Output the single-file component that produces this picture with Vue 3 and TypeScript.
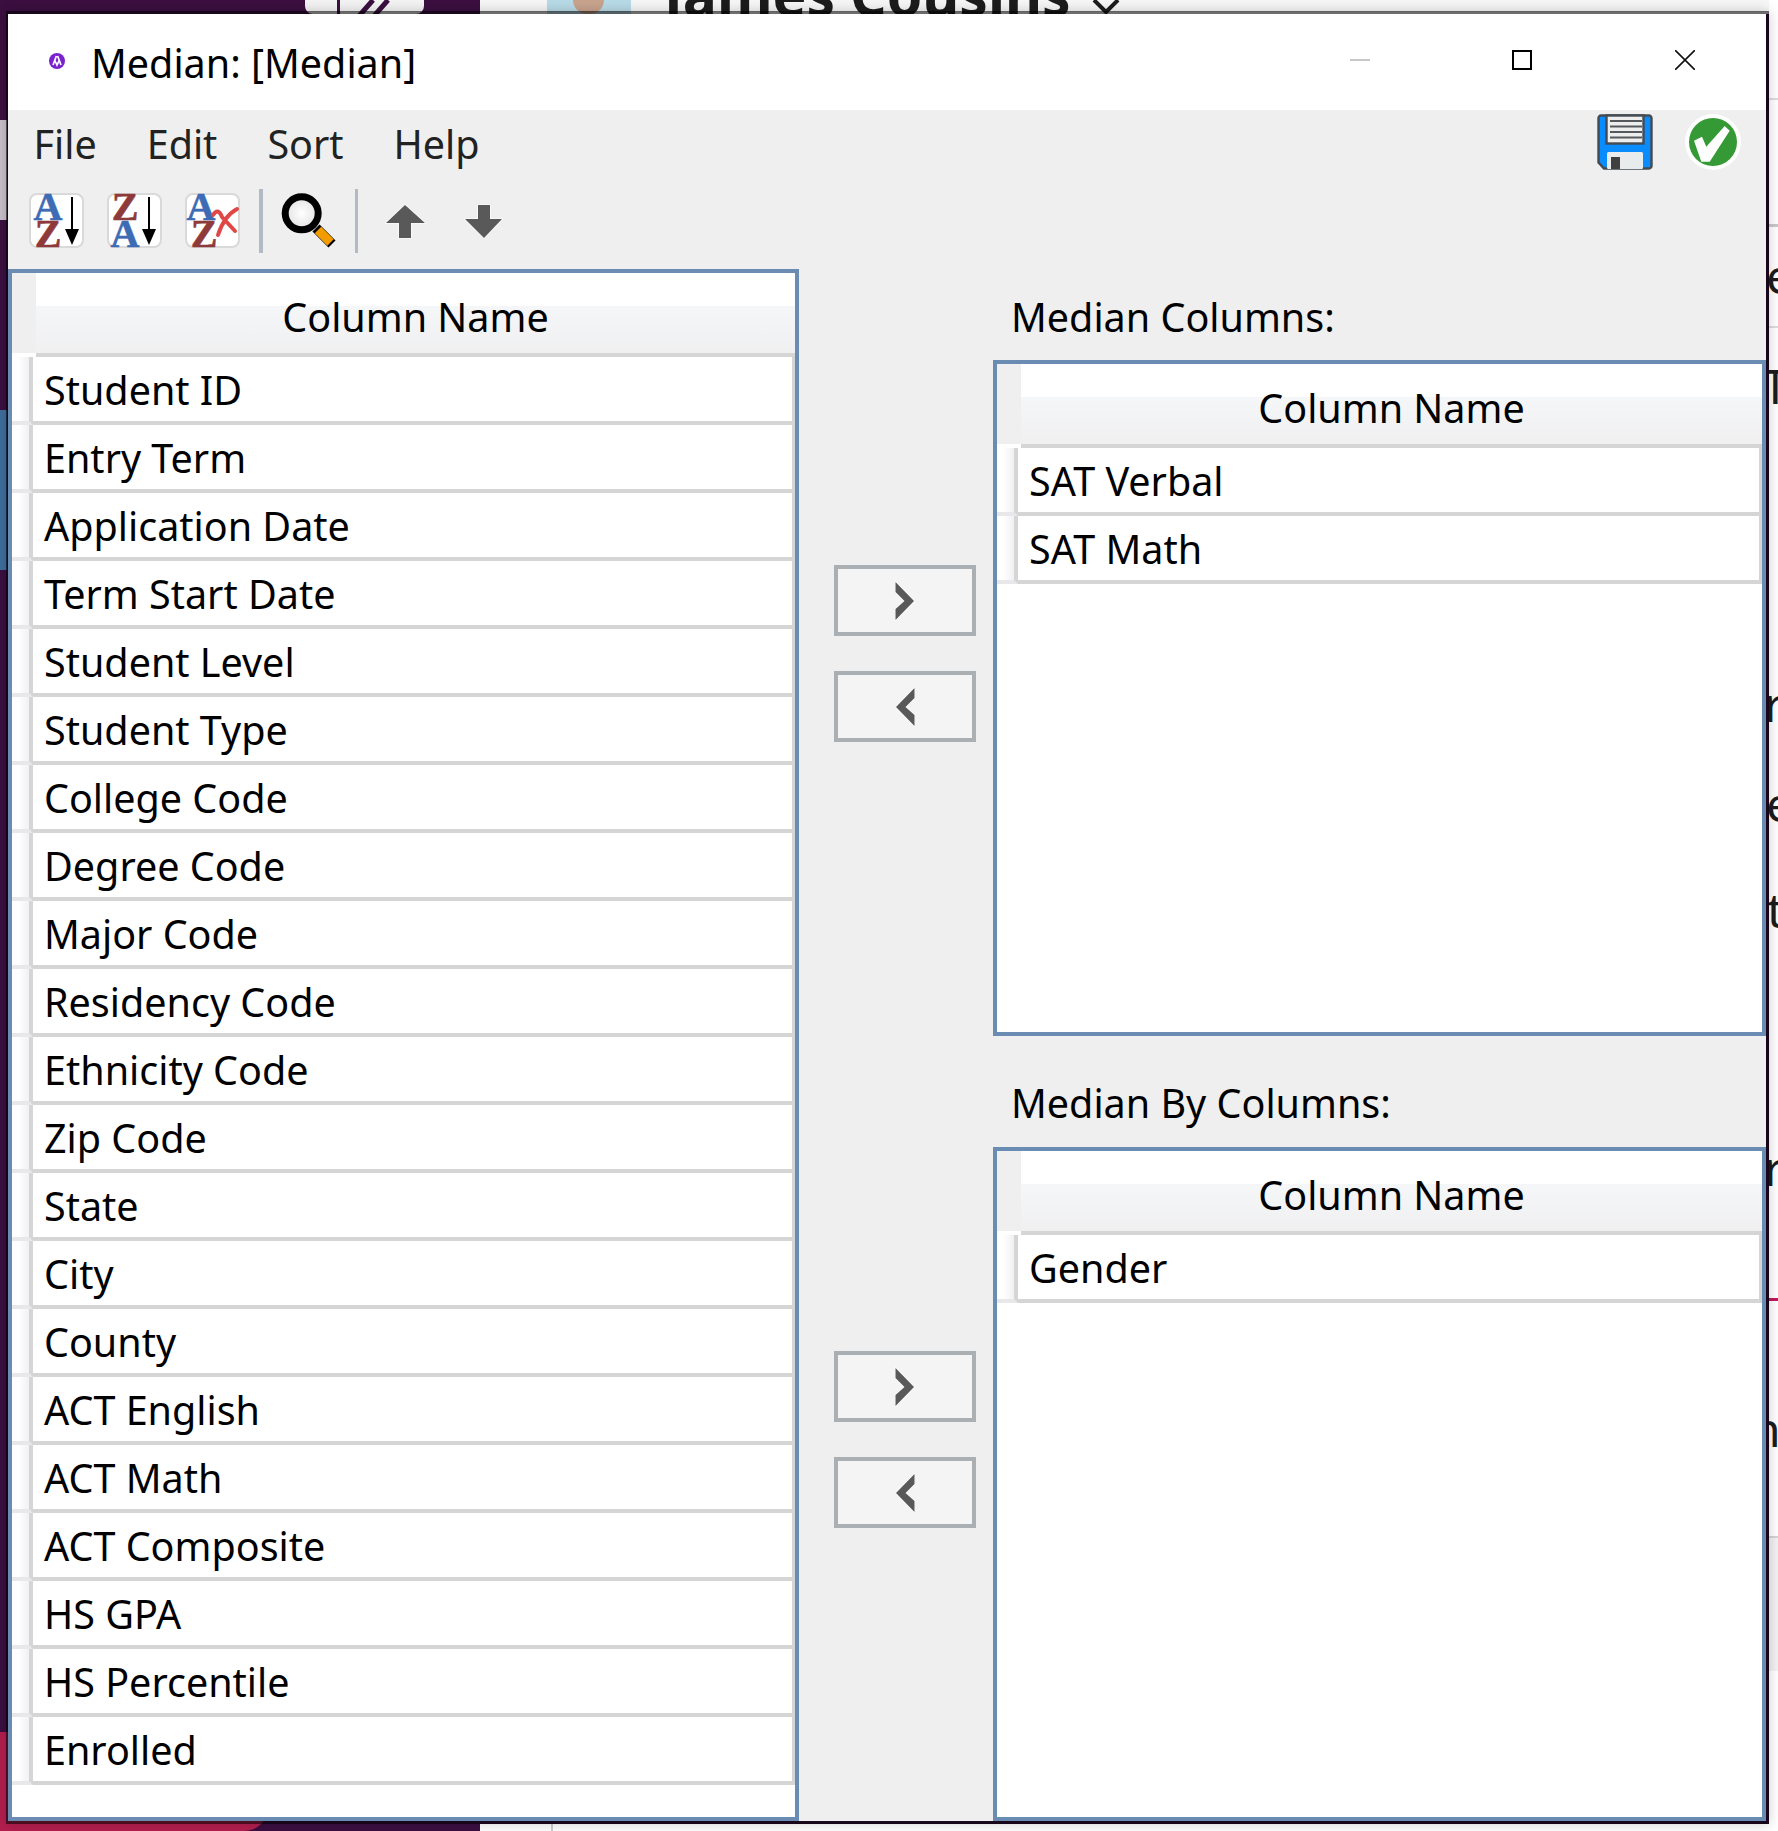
<script setup lang="ts">
const fields: string[] = [
  'Student ID', 'Entry Term', 'Application Date', 'Term Start Date', 'Student Level', 'Student Type',
  'College Code', 'Degree Code', 'Major Code', 'Residency Code', 'Ethnicity Code', 'Zip Code', 'State',
  'City', 'County', 'ACT English', 'ACT Math', 'ACT Composite', 'HS GPA', 'HS Percentile', 'Enrolled'
]
const medianCols: string[] = ['SAT Verbal', 'SAT Math']
const byCols: string[] = ['Gender']
const menus: string[] = ['File', 'Edit', 'Sort', 'Help']
</script>

<template>
  <div class="desk">
    <div class="backdrop">
      <div class="top-white"></div>
      <div class="logo-disc">
        <i></i>
        <svg class="slashes" width="34" height="14" viewBox="0 0 34 14">
          <path d="M2 16L16 0M17 16L31 0" stroke="#3b0f40" stroke-width="5" fill="none" />
        </svg>
      </div>
      <div class="avatar"><i></i></div>
      <div class="person">James Cousins</div>
      <svg class="caret" width="28" height="14" viewBox="0 0 28 14">
        <path d="M2 0L14 12L26 0" stroke="#1d1c1d" stroke-width="4" fill="none" />
      </svg>
      <div class="left-pale"></div>
      <div class="left-blue"></div>
      <div class="left-pink"></div>
      <div class="bottom-pink"></div>
      <div class="bottom-white"><i></i></div>
      <div class="right-strip">
        <b class="line l1"></b><b class="line l2"></b><b class="line l3"></b>
        <span class="frag f1">e</span><span class="frag f2">T</span><span class="frag f3">r</span>
        <span class="frag f4">e</span><span class="frag f5">t</span><span class="frag f6">r</span>
        <b class="red"></b><span class="frag f7">n</span>
        <b class="pale"></b>
      </div>
    </div>

    <div class="window">
      <header class="titlebar">
        <svg class="app-icon" width="16" height="16" viewBox="0 0 16 16">
          <circle cx="8" cy="8" r="8" fill="#7b22cf" />
          <path d="M7.4 3 L4 12 M8.6 3 L12 12 M5.6 7 L8 12 L10.4 7" stroke="#fff" stroke-width="1.7" fill="none" />
        </svg>
        <span class="title">Median: [Median]</span>
        <div class="caption">
          <div class="cap-btn">
            <svg width="20" height="20" viewBox="0 0 20 20"><path d="M0 10H20" stroke="#c8c8c8" stroke-width="2" /></svg>
          </div>
          <div class="cap-btn">
            <svg width="20" height="20" viewBox="0 0 20 20"><rect x="1" y="1" width="18" height="18" fill="none" stroke="#000" stroke-width="2" /></svg>
          </div>
          <div class="cap-btn">
            <svg width="20" height="20" viewBox="0 0 20 20"><path d="M0 0L20 20M20 0L0 20" stroke="#111" stroke-width="1.6" /></svg>
          </div>
        </div>
      </header>

      <div class="menubar">
        <nav class="menus">
          <span v-for="m in menus" :key="m" class="menu">{{ m }}</span>
        </nav>
        <div class="actions">
          <svg width="56" height="56" viewBox="0 0 56 56">
            <path d="M4 1.5H52a2.5 2.5 0 0 1 2.5 2.5V52a2.5 2.5 0 0 1-2.5 2.5H7L1.5 48.5V4A2.5 2.5 0 0 1 4 1.5Z" fill="#0a8cff" stroke="#444b52" stroke-width="2.4" />
            <rect x="9.5" y="1.5" width="37" height="28" fill="#eeeeee" stroke="#444b52" stroke-width="2.4" />
            <path d="M13 7H45M13 12.5H45M13 18H45M13 23.5H45" stroke="#55585c" stroke-width="1.8" />
            <rect x="10" y="38" width="36" height="17" rx="1.5" fill="#e9ecec" />
            <rect x="14" y="43" width="9" height="12" fill="#3f3f3f" />
          </svg>
          <svg width="56" height="56" viewBox="0 0 56 56">
            <circle cx="28" cy="28" r="28" fill="#ffffff" />
            <circle cx="28" cy="28" r="24" fill="#359a35" />
            <path d="M9 26.7L17 22.7L21.3 32.7L39.7 12L44.7 16.7L24.7 47.7H16.3Z" fill="#ffffff" />
          </svg>
        </div>
      </div>

      <div class="toolbar">
        <svg class="tool az" width="55" height="55" viewBox="0 0 55 55">
          <rect x="1" y="1" width="53" height="53" rx="7" fill="#fff" stroke="#d9d9d9" stroke-width="2" />
          <text class="serif blue" x="19" y="27" text-anchor="middle">A</text>
          <text class="serif brown" x="19" y="54" text-anchor="middle">Z</text>
          <path d="M43 4V38" stroke="#000" stroke-width="2" /><path d="M36 36H50L43 52Z" fill="#000" />
        </svg>
        <svg class="tool az" width="55" height="55" viewBox="0 0 55 55">
          <rect x="1" y="1" width="53" height="53" rx="7" fill="#fff" stroke="#d9d9d9" stroke-width="2" />
          <text class="serif brown" x="18" y="27" text-anchor="middle">Z</text>
          <text class="serif blue" x="18" y="54" text-anchor="middle">A</text>
          <path d="M42 4V38" stroke="#000" stroke-width="2" /><path d="M35 36H49L42 52Z" fill="#000" />
        </svg>
        <svg class="tool az" width="55" height="55" viewBox="0 0 55 55">
          <rect x="1" y="1" width="53" height="53" rx="7" fill="#fff" stroke="#d9d9d9" stroke-width="2" />
          <text class="serif blue" x="16" y="27" text-anchor="middle">A</text>
          <text class="serif brown" x="19" y="54" text-anchor="middle">Z</text>
          <path d="M28 22Q33 14 37 24L50 38M52 16Q39 23 33 42" fill="none" stroke="#e04848" stroke-width="4" stroke-linecap="round" />
        </svg>
        <i class="sep s1"></i>
        <svg class="tool mag" width="60" height="60" viewBox="0 0 60 60">
          <defs>
            <radialGradient id="lens"><stop offset="0" stop-color="#ffffff" /><stop offset="1" stop-color="#e2e2e2" /></radialGradient>
          </defs>
          <path d="M36 38L52 54" stroke="#000" stroke-width="10" />
          <path d="M38 40L50.5 52.5" stroke="#f39c00" stroke-width="9" />
          <circle cx="21.7" cy="23.3" r="16.5" fill="url(#lens)" stroke="#000" stroke-width="7" />
        </svg>
        <i class="sep s2"></i>
        <svg class="tool up" width="42" height="36" viewBox="0 0 42 36">
          <path class="halo" d="M21 1L41 19H27V34H15V19H2Z" />
        </svg>
        <svg class="tool down" width="42" height="36" viewBox="0 0 42 36">
          <path class="halo" d="M16 1H28V15H40L22 34L3 15H16Z" />
        </svg>
      </div>

      <main class="panes">
        <section class="grid left">
          <div class="grid-head">
            <div class="corner"></div>
            <div class="head-cell">Column Name</div>
          </div>
          <div v-for="f in fields" :key="f" class="row">
            <div class="row-head"></div>
            <div class="cell">{{ f }}</div>
          </div>
        </section>

        <div class="movers">
          <div class="pair first">
            <button class="mv"><svg width="20" height="40" viewBox="0 0 20 40"><path class="halo" d="M0.5 1L19 20L0.5 39V28L9.5 20L0.5 11Z" /></svg></button>
            <button class="mv"><svg width="20" height="40" viewBox="0 0 20 40"><path class="halo" d="M19.5 1L1 20L19.5 39V28L10.5 20L19.5 11Z" /></svg></button>
          </div>
          <div class="pair second">
            <button class="mv"><svg width="20" height="40" viewBox="0 0 20 40"><path class="halo" d="M0.5 1L19 20L0.5 39V28L9.5 20L0.5 11Z" /></svg></button>
            <button class="mv"><svg width="20" height="40" viewBox="0 0 20 40"><path class="halo" d="M19.5 1L1 20L19.5 39V28L10.5 20L19.5 11Z" /></svg></button>
          </div>
        </div>

        <div class="targets">
          <div class="label l-top">Median Columns:</div>
          <section class="grid t1">
            <div class="grid-head">
              <div class="corner"></div>
              <div class="head-cell">Column Name</div>
            </div>
            <div v-for="c in medianCols" :key="c" class="row">
              <div class="row-head"></div>
              <div class="cell">{{ c }}</div>
            </div>
          </section>
          <div class="label l-bottom">Median By Columns:</div>
          <section class="grid t2">
            <div class="grid-head">
              <div class="corner"></div>
              <div class="head-cell">Column Name</div>
            </div>
            <div v-for="c in byCols" :key="c" class="row">
              <div class="row-head"></div>
              <div class="cell">{{ c }}</div>
            </div>
          </section>
        </div>
      </main>
    </div>
  </div>
</template>

<style>
html, body { margin: 0; padding: 0; background: #fff; }
</style>

<style scoped>
.desk {
  position: relative;
  width: 1778px;
  height: 1831px;
  overflow: hidden;
  background: #3b0f40;
  font-family: "Noto Sans", "Open Sans", sans-serif;
  font-size: 39.5px;
  color: #000;
}

/* the desktop behind the dialog */
.backdrop { position: absolute; inset: 0; overflow: hidden; }
.top-white { position: absolute; left: 480px; right: 0; top: 0; height: 14px; background: #f7f7f7; }
.logo-disc { position: absolute; left: 305px; top: 0; width: 119px; height: 14px; border-radius: 0 0 8px 8px; background: #f4f4f4; }
.logo-disc i { position: absolute; left: 32px; top: 0; width: 3px; height: 100%; background: #3b0f40; }
.slashes { position: absolute; left: 52px; top: 0; display: block; }
.avatar { position: absolute; left: 547px; top: 0; width: 84px; height: 14px; background: #b9dbe8; }
.avatar i { position: absolute; left: 26px; top: 0; width: 31px; height: 14px; border-radius: 0 0 14px 14px; background: #c9a48e; }
.person { position: absolute; left: 664px; top: -36px; font-size: 57px; font-weight: 700; line-height: 60px; color: #1d1c1d; white-space: nowrap; }
.caret { position: absolute; left: 1092px; top: 0; display: block; }
.left-pale { position: absolute; left: 0; top: 120px; width: 7px; height: 100px; background: #c9c0cb; }
.left-blue { position: absolute; left: 0; top: 410px; width: 7px; height: 160px; background: #3f6f9e; }
.left-pink { position: absolute; left: 0; top: 1732px; width: 8px; height: 99px; background: #b31f4f; }
.bottom-pink { position: absolute; left: 0; top: 1790px; width: 268px; height: 41px; border-bottom-right-radius: 24px; background: #b31f4f; }
.bottom-white { position: absolute; left: 480px; right: 0; top: 1824px; height: 7px; background: #fff; }
.bottom-white i { position: absolute; left: 71px; top: 0; width: 2px; height: 7px; background: #d0d0d0; }
.right-strip { position: absolute; left: 1769px; top: 0; width: 9px; height: 1831px; overflow: hidden; background: #fff; }
.line { position: absolute; left: 0; width: 9px; height: 2px; background: #ddd; }
.l1 { top: 98px; }
.l2 { top: 224px; height: 3px; background: #c9c9c9; }
.l3 { top: 326px; }
.frag { position: absolute; left: -3px; font-size: 48px; line-height: 60px; color: #1d1c1d; }
.f1 { top: 246px; }
.f2 { top: 356px; left: -7px; }
.f3 { top: 674px; left: -5px; }
.f4 { top: 774px; left: -3px; }
.f5 { top: 880px; left: -2px; }
.f6 { top: 1138px; left: -5px; }
.f7 { top: 1399px; left: -18px; }
.red { position: absolute; left: 0; top: 1298px; width: 9px; height: 3px; background: #c2185b; }
.pale { position: absolute; left: 0; top: 1536px; width: 9px; height: 135px; background: #f2f2f2; border-top: 2px solid #d4d4d4; box-sizing: border-box; }

/* dialog */
.window {
  position: relative;
  box-sizing: border-box;
  margin: 11px 0 0 6px;
  width: 1763px;
  height: 1813px;
  border-style: solid;
  border-width: 3px 3px 3px 2px;
  border-color: rgba(0, 0, 0, 0.56);
  background: #efefef padding-box;
  box-shadow: 0 0 12px rgba(0, 0, 0, 0.2);
  display: flex;
  flex-direction: column;
}

.titlebar { height: 96px; flex: none; background: #fff; display: flex; align-items: center; padding-left: 41px; }
.app-icon { display: block; flex: none; margin-top: -2px; }
.title { margin-left: 26px; line-height: 54px; margin-top: 1px; }
.caption { margin-left: auto; display: flex; height: 100%; }
.cap-btn { width: 162.5px; display: flex; align-items: center; justify-content: center; padding-bottom: 5px; box-sizing: border-box; }
.cap-btn svg { display: block; }

.menubar { height: 70px; flex: none; display: flex; justify-content: space-between; align-items: flex-start; padding: 0 25px 0 25.5px; }
.menus { display: flex; gap: 50px; padding-top: 7px; }
.menu { line-height: 54px; color: #222; }
.actions { display: flex; gap: 32px; padding-top: 4px; }
.actions svg { display: block; }

.toolbar { height: 89px; flex: none; display: flex; align-items: flex-start; padding-left: 21px; }
.tool { display: block; flex: none; margin-top: 13px; }
.az + .az { margin-left: 23px; }
.serif { font-family: "Liberation Serif", serif; font-weight: 700; font-size: 40px; stroke-width: 0.6px; }
.blue { fill: #3d6cb5; stroke: #3d6cb5; }
.brown { fill: #8f3a3a; stroke: #8f3a3a; }
.halo { fill: #595959; stroke: #fff; stroke-width: 1.2; paint-order: stroke; }
.sep { display: block; flex: none; width: 3.5px; height: 64px; margin-top: 9px; background: #b2bac6; }
.s1 { margin-left: 19px; }
.mag { margin-left: 17px; margin-top: 10px; }
.s2 { margin-left: 15px; }
.up { margin-left: 26px; margin-top: 24px; }
.down { margin-left: 36px; margin-top: 24px; }

.panes { flex: 1; min-height: 0; display: flex; }

.grid { box-sizing: border-box; border: 4px solid #6a8cb2; background: #fff; overflow: hidden; }
.left { width: 791px; flex: none; }
.grid-head { display: flex; height: 84px; }
.corner { width: 24px; flex: none; height: 80px; background: #efefef; }
.head-cell {
  flex: 1;
  height: 84px;
  box-sizing: border-box;
  border-bottom: 4px solid #d5d5d5;
  padding-top: 7px;
  display: flex;
  align-items: center;
  justify-content: center;
  background: linear-gradient(#fff 0, #fff 33px, #f5f6f8 33px, #f0f0f1 80px);
}
.row { display: flex; height: 68px; }
.row-head {
  box-sizing: border-box;
  width: 21px;
  flex: none;
  border-right: 4px solid #d5d5d5;
  border-bottom: 4px solid #e8e8ea;
  background: linear-gradient(90deg, #fff 0, #fff 6px, #f1f1f4 17px);
}
.cell {
  box-sizing: border-box;
  flex: 1;
  min-width: 0;
  padding: 2px 0 0 11px;
  border-right: 3px solid #d5d5d5;
  border-bottom: 4px solid #d5d5d5;
  display: flex;
  align-items: center;
}

.movers { width: 194px; flex: none; padding-left: 35px; box-sizing: border-box; }
.pair { display: flex; flex-direction: column; gap: 35px; }
.first { margin-top: 296px; }
.second { margin-top: 609px; }
.mv {
  box-sizing: border-box;
  width: 142px;
  height: 71px;
  padding: 0;
  border: 4px solid #a9afb2;
  background: #f4f4f4;
  display: flex;
  align-items: center;
  justify-content: center;
}
.mv svg { display: block; }

.targets { flex: 1; min-width: 0; display: flex; flex-direction: column; }
.label { padding-left: 18px; line-height: 54px; }
.l-top { height: 91px; padding-top: 21px; box-sizing: border-box; }
.l-bottom { height: 111px; padding-top: 40px; box-sizing: border-box; }
.t1 { height: 676px; flex: none; }
.t2 { flex: 1; min-height: 0; }
</style>
